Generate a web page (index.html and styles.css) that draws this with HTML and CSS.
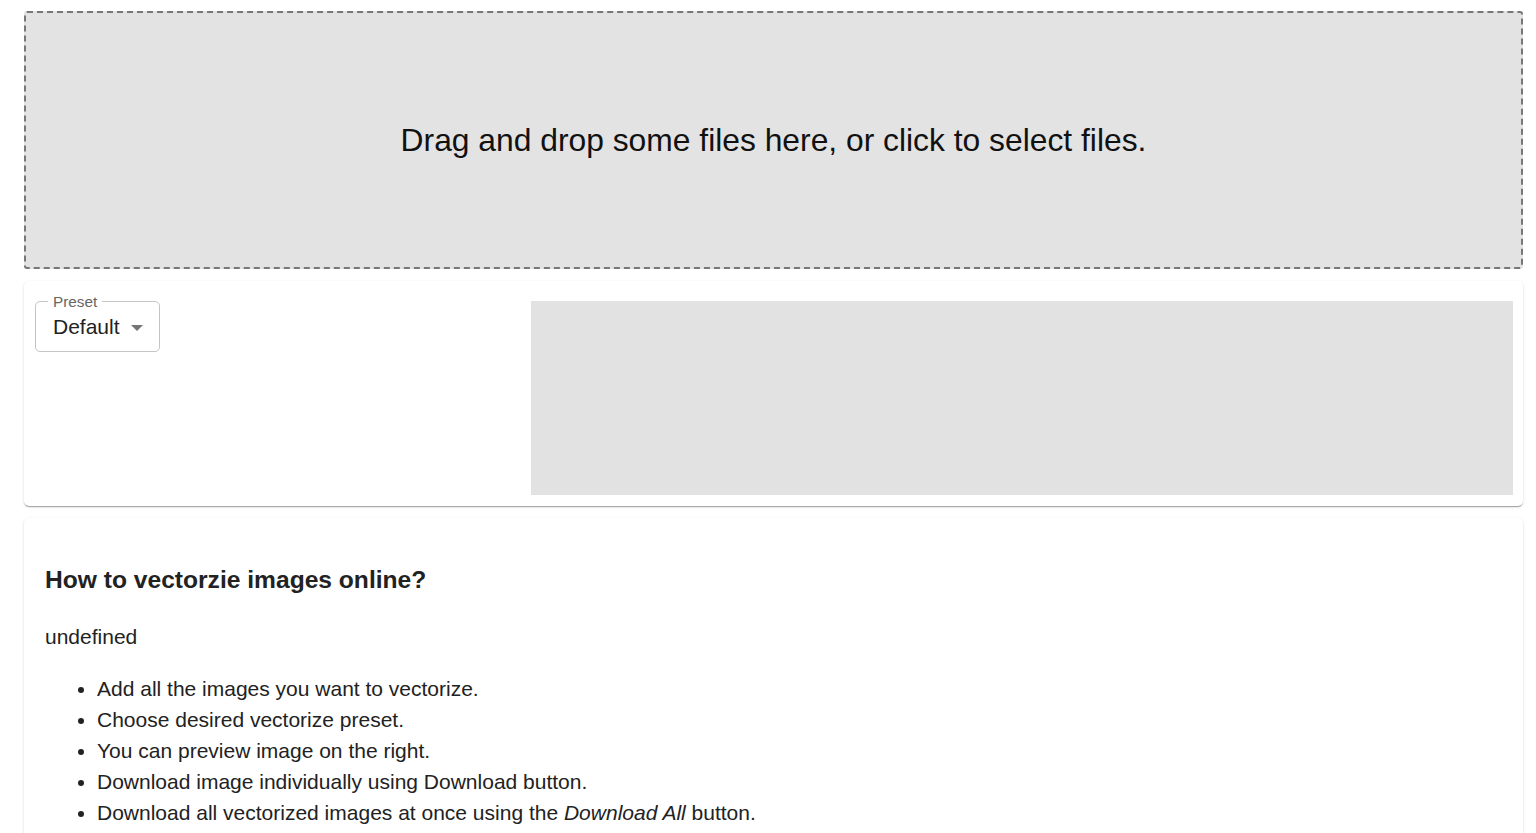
FILE: index.html
```html
<!DOCTYPE html>
<html lang="en">
<head>
<meta charset="utf-8">
<title>Vectorize images</title>
<link rel="stylesheet" href="styles.css">
</head>
<body>
<div class="page">
  <div class="dropzone">
    <p class="dropzone-text">Drag and drop some files here, or click to select files.</p>
  </div>

  <div class="card settings">
    <div class="settings-left">
      <div class="select">
        <span class="select-label">Preset</span>
        <span class="select-value">Default</span>
        <svg class="select-arrow" width="12" height="6" viewBox="0 0 12 6"><path d="M0 0h12L6 6z" fill="#757575"/></svg>
      </div>
    </div>
    <div class="preview"></div>
  </div>

  <div class="card howto">
    <h3 class="howto-title">How to vectorzie images online?</h3>
    <p class="howto-text">undefined</p>
    <ul class="howto-list">
      <li>Add all the images you want to vectorize.</li>
      <li>Choose desired vectorize preset.</li>
      <li>You can preview image on the right.</li>
      <li>Download image individually using Download button.</li>
      <li>Download all vectorized images at once using the <em>Download All</em> button.</li>
    </ul>
  </div>
</div>
</body>
</html>
```

FILE: styles.css
```css
html, body {
  margin: 0;
  padding: 0;
  background: #ffffff;
}

body {
  font-family: "Liberation Sans", Arial, sans-serif;
  color: #222222;
}

.page {
  padding: 11px 13px 0 24px;
  display: flex;
  flex-direction: column;
  gap: 12px;
}

.dropzone {
  height: 258px;
  box-sizing: border-box;
  border: 2px dashed #777777;
  border-radius: 3px;
  background: #e3e3e3;
  display: flex;
  align-items: center;
  justify-content: center;
}

.dropzone-text {
  margin: 0;
  font-size: 31.8px;
  color: #111111;
}

.card {
  background: #ffffff;
  border-radius: 5px;
  box-shadow: 0 2px 1px -1px rgba(0,0,0,0.2), 0 1px 1px 0 rgba(0,0,0,0.14), 0 1px 3px 0 rgba(0,0,0,0.12);
}

.settings {
  display: grid;
  grid-template-columns: 486px 1fr;
  gap: 10px;
  padding: 20px 10px 11px 11px;
  height: 225px;
  box-sizing: border-box;
}

.select {
  position: relative;
  width: 125px;
  height: 51px;
  box-sizing: border-box;
  border: 1px solid #c4c4c4;
  border-radius: 5px;
  display: flex;
  align-items: center;
  padding-left: 17px;
}

.select-label {
  position: absolute;
  top: -9px;
  left: 12px;
  padding: 0 5px;
  background: #ffffff;
  font-size: 15.3px;
  line-height: 17px;
  color: #666666;
}

.select-value {
  font-size: 21px;
  color: #222222;
}

.select-arrow {
  margin-left: 11px;
  margin-top: 2px;
}

.preview {
  background: #e2e2e2;
}

.howto {
  padding: 48px 21px 20px 21px;
}

.howto-title {
  margin: 0 0 31px 0;
  font-size: 24.6px;
  font-weight: bold;
  color: #222222;
}

.howto-text {
  margin: 0 0 24px 0;
  font-size: 21px;
}

.howto-list {
  margin: 0;
  padding-left: 52px;
  font-size: 21px;
  line-height: 31px;
}
```
